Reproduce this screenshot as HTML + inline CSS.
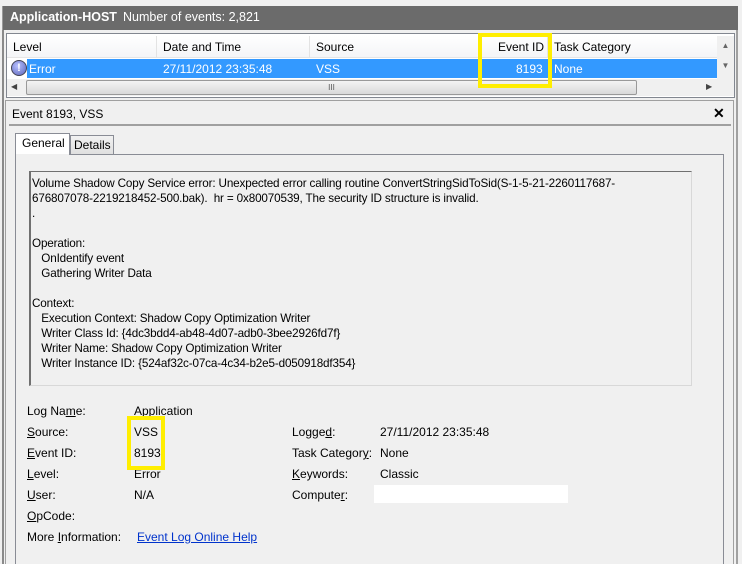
<!DOCTYPE html>
<html><head><style>
*{margin:0;padding:0;box-sizing:border-box}
body{width:742px;height:564px;background:#f0f0f0;font-family:"Liberation Sans",sans-serif;font-size:12px;color:#000;position:relative;overflow:hidden}
.a{position:absolute;white-space:nowrap}
u{text-decoration:underline}
</style></head><body>
<div class="a" style="left:2px;top:6px;width:736px;height:24px;background:#6b6b6b;border-left:1px solid #999"></div>
<div class="a" style="left:10px;top:10px;color:#fff;font-weight:bold;font-size:12.5px">Application-HOST</div>
<div class="a" style="left:123px;top:10px;color:#fff;font-size:12.5px">Number of events: 2,821</div>
<div class="a" style="left:2px;top:30px;width:2px;height:534px;background:#8a8a8a"></div>
<div class="a" style="left:736px;top:30px;width:2px;height:534px;background:#a0a0a0"></div>
<!-- list -->
<div class="a" style="left:6px;top:33px;width:729px;height:65px;background:#fff;border:1px solid #828790"></div>
<div class="a" style="left:7px;top:36px;width:710px;height:22px;background:linear-gradient(#fff,#f4f5f7);border-bottom:1px solid #e5e5e5"></div>
<div class="a" style="left:156px;top:36px;width:1px;height:22px;background:#e3e3e3"></div>
<div class="a" style="left:309px;top:36px;width:1px;height:22px;background:#e3e3e3"></div>
<div class="a" style="left:547px;top:36px;width:1px;height:22px;background:#e3e3e3"></div>
<div class="a" style="left:13px;top:40px">Level</div>
<div class="a" style="left:163px;top:40px">Date and Time</div>
<div class="a" style="left:316px;top:40px">Source</div>
<div class="a" style="left:498px;top:40px">Event ID</div>
<div class="a" style="left:554px;top:40px">Task Category</div>
<div class="a" style="left:27px;top:59px;width:690px;height:19px;background:#3399ff"></div>
<div class="a" style="left:11px;top:60px;width:16px;height:16px;border-radius:50%;background:radial-gradient(circle at 40% 35%,#b8c0ff,#5a63b8);border:1px solid #445;color:#fff;font-weight:bold;font-size:11px;text-align:center;line-height:14px">!</div>
<div class="a" style="left:29px;top:62px;color:#fff">Error</div>
<div class="a" style="left:163px;top:62px;color:#fff">27/11/2012 23:35:48</div>
<div class="a" style="left:316px;top:62px;color:#fff">VSS</div>
<div class="a" style="left:516px;top:62px;color:#fff">8193</div>
<div class="a" style="left:554px;top:62px;color:#fff">None</div>
<div class="a" style="left:717px;top:36px;width:17px;height:43px;background:#f0f0f0;color:#666;font-size:8px;text-align:center;line-height:20px">▲<br>▼</div>
<div class="a" style="left:7px;top:79px;width:727px;height:17px;background:#f0f0f0"></div>
<div class="a" style="left:11px;top:82px;font-size:8px;color:#444">◀</div>
<div class="a" style="left:26px;top:80px;width:611px;height:15px;background:linear-gradient(#f3f3f3,#d9d9d9);border:1px solid #999;border-radius:2px;text-align:center;font-size:8px;line-height:13px;color:#555">III</div>
<div class="a" style="left:706px;top:82px;font-size:8px;color:#444">▶</div>
<div class="a" style="left:478px;top:33px;width:74px;height:55px;border:4px solid #ffee00"></div>
<!-- detail -->
<div class="a" style="left:5px;top:100px;width:729px;height:464px;border:1px solid #a0a0a0;border-bottom:none"></div>
<div class="a" style="left:12px;top:107px">Event 8193, VSS</div>
<div class="a" style="left:713px;top:105px;font-weight:bold;font-size:14px">✕</div>
<div class="a" style="left:9px;top:124px;width:722px;height:2px;background:#a0a0a0"></div>
<div class="a" style="left:15px;top:154px;width:709px;height:410px;border:1px solid #898c95;border-bottom:none;background:#f0f0f0"></div>
<div class="a" style="left:15px;top:133px;width:55px;height:22px;border:1px solid #898c95;border-bottom:none;background:#fff"></div>
<div class="a" style="left:22px;top:136px">General</div>
<div class="a" style="left:70px;top:135px;width:44px;height:19px;border:1px solid #898c95;border-bottom:none;background:linear-gradient(#f2f2f2,#e0e0e0)"></div>
<div class="a" style="left:74px;top:138px">Details</div>
<div class="a" style="left:16px;top:154px;width:53px;height:2px;background:#f0f0f0"></div>
<div class="a" style="left:29px;top:171px;width:663px;height:215px;border:1px solid #d8d8d8;border-top:1px solid #707070;border-left:2px solid #707070"></div>
<div class="a" style="left:32px;top:176px;line-height:15px;font-size:11.7px;letter-spacing:-0.15px">Volume Shadow Copy Service error: Unexpected error calling routine ConvertStringSidToSid(S-1-5-21-2260117687-<br>676807078-2219218452-500.bak).&nbsp; hr = 0x80070539, The security ID structure is invalid.<br>.<br><br>Operation:<br>&nbsp;&nbsp; OnIdentify event<br>&nbsp;&nbsp; Gathering Writer Data<br><br>Context:<br>&nbsp;&nbsp; Execution Context: Shadow Copy Optimization Writer<br>&nbsp;&nbsp; Writer Class Id: {4dc3bdd4-ab48-4d07-adb0-3bee2926fd7f}<br>&nbsp;&nbsp; Writer Name: Shadow Copy Optimization Writer<br>&nbsp;&nbsp; Writer Instance ID: {524af32c-07ca-4c34-b2e5-d050918df354}</div>
<div class="a" style="left:27px;top:404px">Log Na<u>m</u>e:</div>
<div class="a" style="left:134px;top:404px">Application</div>
<div class="a" style="left:27px;top:425px"><u>S</u>ource:</div>
<div class="a" style="left:134px;top:425px">VSS</div>
<div class="a" style="left:27px;top:446px"><u>E</u>vent ID:</div>
<div class="a" style="left:134px;top:446px">8193</div>
<div class="a" style="left:27px;top:467px"><u>L</u>evel:</div>
<div class="a" style="left:134px;top:467px">Error</div>
<div class="a" style="left:27px;top:488px"><u>U</u>ser:</div>
<div class="a" style="left:134px;top:488px">N/A</div>
<div class="a" style="left:27px;top:509px"><u>O</u>pCode:</div>
<div class="a" style="left:27px;top:530px">More <u>I</u>nformation:</div>
<div class="a" style="left:137px;top:530px;color:#0033cc;text-decoration:underline">Event Log Online Help</div>
<div class="a" style="left:292px;top:425px">Logge<u>d</u>:</div>
<div class="a" style="left:380px;top:425px">27/11/2012 23:35:48</div>
<div class="a" style="left:292px;top:446px">Task Categor<u>y</u>:</div>
<div class="a" style="left:380px;top:446px">None</div>
<div class="a" style="left:292px;top:467px"><u>K</u>eywords:</div>
<div class="a" style="left:380px;top:467px">Classic</div>
<div class="a" style="left:292px;top:488px">Compute<u>r</u>:</div>
<div class="a" style="left:374px;top:485px;width:194px;height:18px;background:#fff"></div>
<div class="a" style="left:127px;top:416px;width:38px;height:54px;border:4px solid #ffee00"></div>
</body></html>
